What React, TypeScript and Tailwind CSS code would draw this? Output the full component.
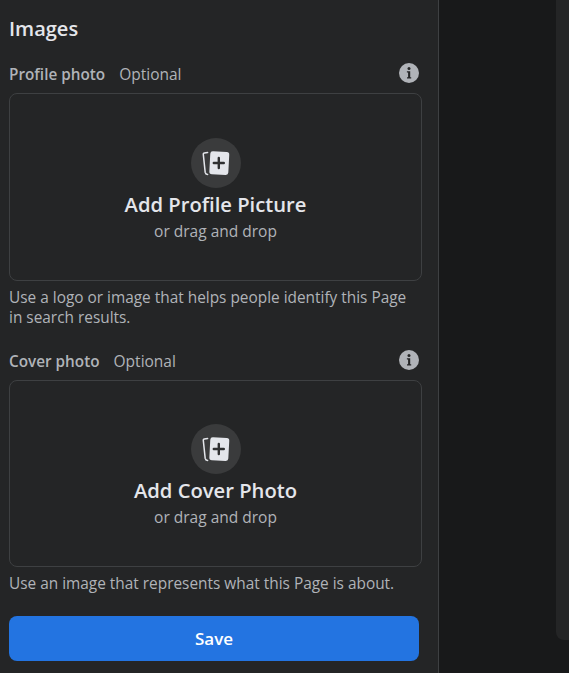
const font = { fontFamily: '"Open Sans", "Noto Sans", sans-serif' };

function InfoIcon() {
  return (
    <svg width="20" height="20" viewBox="0 0 20 20" className="shrink-0">
      <circle cx="10" cy="10" r="10" fill="#b0b3b8" />
      <circle cx="10" cy="5.6" r="1.5" fill="#242526" />
      <path d="M7.9 8.2h3.3v6h1v1.4H8v-1.4h1.1V9.6H7.9z" fill="#242526" />
    </svg>
  );
}

function AddPhotoIcon() {
  return (
    <svg width="28" height="28" viewBox="0 0 28 28">
      <path d="M5.6 3.6 2.4 4c-.9.1-1.2.7-1.1 1.4l1.9 18c.2 1.2.9 1.9 2.4 2" fill="none" stroke="#e4e6eb" strokeWidth="1.5" strokeLinecap="round" />
      <rect x="7.8" y="2.6" width="19" height="23" rx="2.6" fill="#e4e6eb" transform="rotate(3 17 14)" />
      <path d="M16.8 9v10M11.8 14h10" stroke="#2f3031" strokeWidth="2.4" strokeLinecap="round" />
    </svg>
  );
}

function UploadBox({ title, compact }: { title: string; compact?: boolean }) {
  return (
    <button
      className={
        compact
          ? "flex h-[187px] w-[413px] flex-col items-center rounded-lg border border-[#3e4042] bg-[#242526] pt-[43px]"
          : "flex h-[188px] w-[413px] flex-col items-center rounded-lg border border-[#3e4042] bg-[#242526] pt-[44px]"
      }
    >
      <span className="flex h-[50px] w-[50px] items-center justify-center rounded-full bg-[#3a3b3c]">
        <AddPhotoIcon />
      </span>
      <span className="mt-[2px] text-[20.2px] leading-[28px] font-semibold text-[#e4e6eb]">{title}</span>
      <span className="text-[15.5px] leading-[27px] text-[#b0b3b8]">or drag and drop</span>
    </button>
  );
}

function PhotoField({ label, title, help, compact }: { label: string; title: string; help: string; compact?: boolean }) {
  return (
    <section>
      <div className="flex h-[20px] w-[410px] items-center justify-between">
        <div className="flex items-center gap-[14px] pt-[2px] text-[15.5px] leading-[20px] text-[#b0b3b8]">
          <span className="text-[15.3px] font-semibold">{label}</span>
          <span>Optional</span>
        </div>
        <InfoIcon />
      </div>
      <div className="mt-[10px]">
        <UploadBox title={title} compact={compact} />
      </div>
      <p className="mt-[7px] w-[413px] text-[15.4px] leading-[20px] text-[#b0b3b8]">{help}</p>
    </section>
  );
}

export default function App() {
  return (
    <div className="flex h-[673px] w-[569px] overflow-hidden bg-[#18191a]" style={font}>
      <aside className="flex h-full w-[439px] shrink-0 flex-col border-r border-[#3e4042] bg-[#242526]">
        <div className="flex-1 pl-[9px]">
          <h2 className="pt-[15px] text-[20px] leading-[28px] font-semibold text-[#e4e6eb]">Images</h2>
          <div className="mt-[20px] flex flex-col gap-[22px]">
            <PhotoField
              label="Profile photo"
              title="Add Profile Picture"
              help="Use a logo or image that helps people identify this Page in search results."
            />
            <PhotoField
              label="Cover photo"
              title="Add Cover Photo"
              compact
              help="Use an image that represents what this Page is about."
            />
          </div>
        </div>
        <div className="px-[9px] pb-[12px]">
          <button className="h-[45px] w-[410px] rounded-lg bg-[#2374e1] text-[17px] font-semibold text-white">
            Save
          </button>
        </div>
      </aside>
      <main className="flex-1 pl-[117px]">
        <div className="h-[640px] rounded-bl-lg bg-[#242526]" />
      </main>
    </div>
  );
}
